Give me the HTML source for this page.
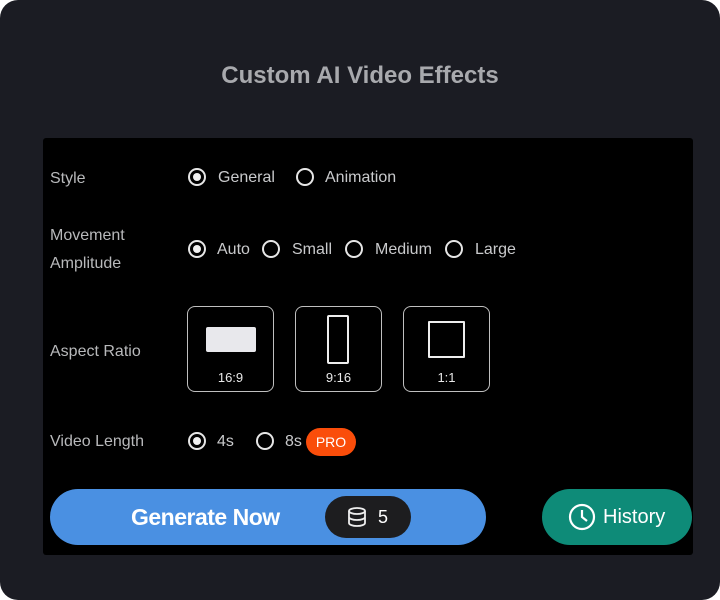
<!DOCTYPE html>
<html><head><style>
*{margin:0;padding:0;box-sizing:border-box}
body{width:720px;height:600px;background:#fff;font-family:"Liberation Sans",sans-serif;position:relative;overflow:hidden}
.card{position:absolute;left:0;top:0;width:720px;height:600px;background:#1b1c23;border-radius:18px}
.t{position:absolute;color:#c9cacc;font-size:16px;white-space:nowrap}
.lbl{color:#b8b9bb}
.r{position:absolute;width:18px;height:18px;border:2px solid #e6e6e6;border-radius:50%}
.r.on::after{content:"";position:absolute;left:3px;top:3px;width:8px;height:8px;border-radius:50%;background:#f0f0f0}
.box{position:absolute;top:306px;width:87px;height:86px;border:1.5px solid #bfbfbf;border-radius:8px}
.cap{position:absolute;bottom:6px;width:100%;text-align:center;color:#e8e8e8;font-size:13px}
</style></head><body>
<div class="card"></div>
<div class="t" style="left:0;width:720px;text-align:center;top:62px;font-size:24px;font-weight:bold;color:#a8a9ad">Custom AI Video Effects</div>
<div style="position:absolute;left:43px;top:138px;width:650px;height:417px;background:#000;border-radius:3px"></div>

<div class="t lbl" style="left:50px;top:170px">Style</div>
<div class="r on" style="left:188px;top:168px"></div><div class="t" style="left:218px;top:169px">General</div>
<div class="r" style="left:296px;top:168px"></div><div class="t" style="left:325px;top:169px">Animation</div>

<div class="t lbl" style="left:50px;top:227px">Movement</div>
<div class="t lbl" style="left:50px;top:255px">Amplitude</div>
<div class="r on" style="left:188px;top:240px"></div><div class="t" style="left:217px;top:241px">Auto</div>
<div class="r" style="left:262px;top:240px"></div><div class="t" style="left:292px;top:241px">Small</div>
<div class="r" style="left:345px;top:240px"></div><div class="t" style="left:375px;top:241px">Medium</div>
<div class="r" style="left:445px;top:240px"></div><div class="t" style="left:475px;top:241px">Large</div>

<div class="t lbl" style="left:50px;top:343px">Aspect Ratio</div>
<div class="box" style="left:187px"><div style="position:absolute;left:18px;top:20px;width:50px;height:25px;background:#e8e8ec;border-radius:2px"></div><div class="cap">16:9</div></div>
<div class="box" style="left:295px"><div style="position:absolute;left:31px;top:8px;width:22px;height:49px;border:2px solid #eee;border-radius:2px"></div><div class="cap">9:16</div></div>
<div class="box" style="left:403px"><div style="position:absolute;left:24px;top:14px;width:37px;height:37px;border:2px solid #eee;border-radius:1px"></div><div class="cap">1:1</div></div>

<div class="t lbl" style="left:50px;top:433px">Video Length</div>
<div class="r on" style="left:188px;top:432px"></div><div class="t" style="left:217px;top:433px">4s</div>
<div class="r" style="left:256px;top:432px"></div><div class="t" style="left:285px;top:433px">8s</div>
<div style="position:absolute;left:306px;top:428px;width:50px;height:28px;background:#fa4d0a;border-radius:14px;color:#fff;font-size:14px;text-align:center;line-height:28px">PRO</div>

<div style="position:absolute;left:50px;top:489px;width:436px;height:56px;background:#4a90e2;border-radius:28px"></div>
<div class="t" style="left:131px;top:504px;font-size:23px;font-weight:bold;color:#fff;letter-spacing:-0.5px">Generate Now</div>
<div style="position:absolute;left:325px;top:496px;width:86px;height:42px;background:#1d1d1f;border-radius:21px"></div>
<svg style="position:absolute;left:346px;top:506px" width="22" height="22" viewBox="0 0 22 22" fill="none" stroke="#eee" stroke-width="1.8"><ellipse cx="11" cy="5" rx="8" ry="3"/><path d="M3 5v12c0 1.7 3.6 3 8 3s8-1.3 8-3V5M3 11c0 1.7 3.6 3 8 3s8-1.3 8-3"/></svg>
<div class="t" style="left:378px;top:507px;font-size:18px;color:#fff">5</div>

<div style="position:absolute;left:542px;top:489px;width:150px;height:56px;background:#0e8b78;border-radius:28px"></div>
<svg style="position:absolute;left:568px;top:503px" width="28" height="28" viewBox="0 0 28 28" fill="none" stroke="#fff" stroke-width="2.2"><circle cx="14" cy="14" r="12"/><path d="M14 7v7l5 4"/></svg>
<div class="t" style="left:603px;top:506px;font-size:20px;color:#fff">History</div>
</body></html>
